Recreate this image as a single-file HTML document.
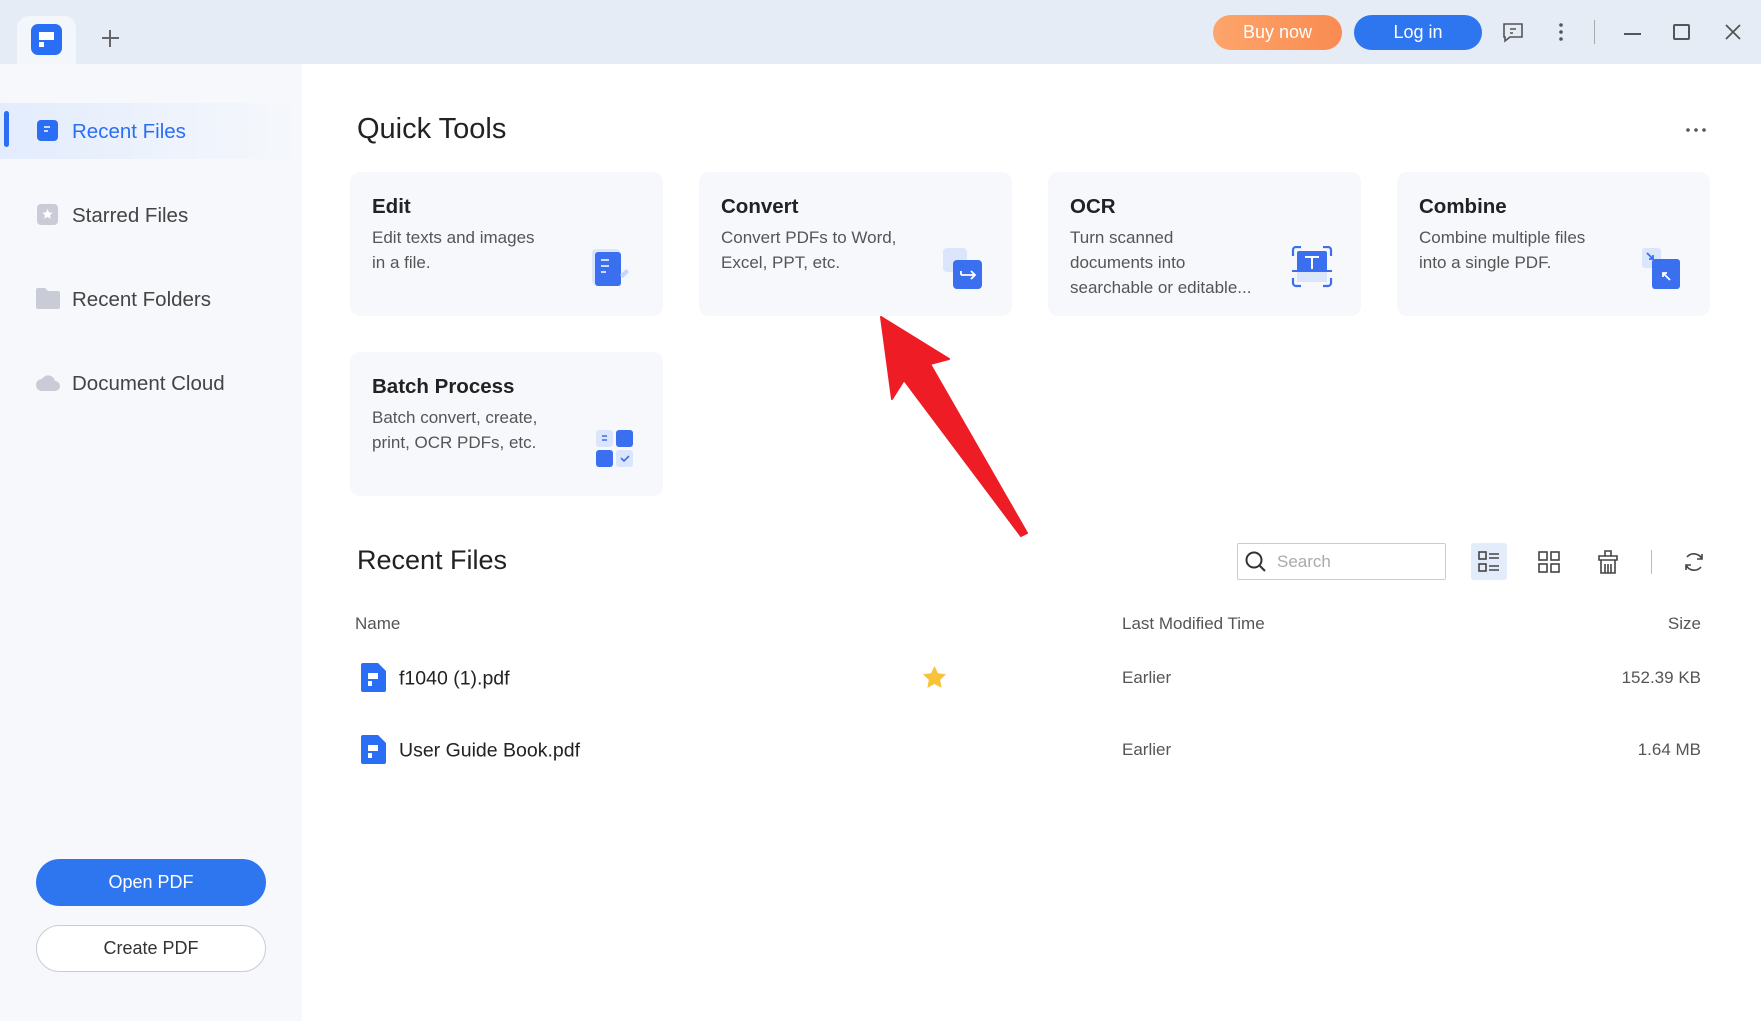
<!DOCTYPE html>
<html><head><meta charset="utf-8"><style>
*{margin:0;padding:0;box-sizing:border-box}
body{width:1761px;height:1021px;overflow:hidden;background:#fff;font-family:"Liberation Sans",sans-serif;position:relative;color:#222}
.abs{position:absolute}
.top{left:0;top:0;width:1761px;height:64px;background:#e5ecf6}
.side{left:0;top:64px;width:302px;height:957px;background:#f6f8fb}
.nav{left:72px;font-size:20.5px;color:#444;transform:translateY(-50%)}
.card{width:313px;height:144px;background:#f6f8fb;border-radius:10px}
.card h3{position:absolute;left:22px;top:23px;font-size:20.5px;font-weight:bold;color:#222}
.card p{position:absolute;left:22px;top:53px;font-size:17px;line-height:25px;color:#555}
.btn{border-radius:24px;text-align:center;font-size:18px}
.gray{color:#555;font-size:17px;transform:translateY(-50%)}
</style></head><body>
<div class="abs top"></div>
<div class="abs" style="left:17px;top:16px;width:59px;height:48px;background:#f3f6fb;border-radius:12px 12px 0 0"></div>
<svg class="abs" style="left:31px;top:24px" width="31" height="31" viewBox="0 0 31 31"><rect width="31" height="31" rx="7" fill="#2b6ef6"/><rect x="8" y="8" width="15" height="8" fill="#fff"/><rect x="8" y="18" width="5" height="5" fill="#fff"/></svg>
<div class="abs" style="left:102px;top:37px;width:17px;height:2px;background:#666"></div>
<div class="abs" style="left:109px;top:30px;width:2px;height:17px;background:#666"></div>
<div class="abs btn" style="left:1213px;top:15px;width:129px;height:35px;line-height:35px;background:linear-gradient(90deg,#fda56b,#f98b52);color:#fff">Buy now</div>
<div class="abs btn" style="left:1354px;top:15px;width:128px;height:35px;line-height:35px;background:#2e76f0;color:#fff">Log in</div>
<svg class="abs" style="left:1501px;top:20px" width="24" height="24" viewBox="0 0 24 24" fill="none" stroke="#555" stroke-width="1.6"><path d="M3 4h18v13H9l-5 4v-4H3z"/><path d="M9 9h6M9 13h3"/></svg>
<svg class="abs" style="left:1555px;top:20px" width="12" height="24"><circle cx="6" cy="5" r="1.8" fill="#555"/><circle cx="6" cy="12" r="1.8" fill="#555"/><circle cx="6" cy="19" r="1.8" fill="#555"/></svg>
<div class="abs" style="left:1594px;top:20px;width:1px;height:24px;background:#aaa"></div>
<div class="abs" style="left:1624px;top:33px;width:17px;height:2px;background:#555"></div>
<div class="abs" style="left:1673px;top:24px;width:17px;height:16px;border:2px solid #555;border-radius:2px"></div>
<svg class="abs" style="left:1724px;top:23px" width="18" height="18"><path d="M2 2L16 16M16 2L2 16" stroke="#555" stroke-width="1.8"/></svg>

<div class="abs side"></div>
<div class="abs" style="left:0;top:103px;width:302px;height:56px;background:linear-gradient(90deg,#e3ecfd,#f6f8fb)"></div>
<div class="abs" style="left:4px;top:111px;width:5px;height:36px;background:#2b6ef6;border-radius:3px"></div>
<svg class="abs" style="left:37px;top:120px" width="21" height="21"><rect width="21" height="21" rx="4" fill="#2b6ef6"/><path d="M7 7h6M7 11h4" stroke="#fff" stroke-width="1.6"/></svg>
<div class="abs nav" style="top:132px;color:#2b6ef6">Recent Files</div>
<svg class="abs" style="left:37px;top:204px" width="21" height="21"><rect width="21" height="21" rx="4" fill="#c9ccd6"/><path d="M10.5 5l1.6 3.4 3.6.4-2.7 2.4.8 3.6-3.3-1.9-3.3 1.9.8-3.6-2.7-2.4 3.6-.4z" fill="#fff"/></svg>
<div class="abs nav" style="top:216px">Starred Files</div>
<svg class="abs" style="left:36px;top:288px" width="24" height="21"><path d="M0 2a2 2 0 012-2h7l3 3h10a2 2 0 012 2v14a2 2 0 01-2 2H2a2 2 0 01-2-2z" fill="#c9ccd6"/></svg>
<div class="abs nav" style="top:300px">Recent Folders</div>
<svg class="abs" style="left:36px;top:373px" width="24" height="18"><path d="M6 18a6 6 0 010-12 7 7 0 0113 2 5 5 0 010 10z" fill="#c9ccd6"/></svg>
<div class="abs nav" style="top:384px">Document Cloud</div>
<div class="abs btn" style="left:36px;top:859px;width:230px;height:47px;line-height:47px;background:#2e76f0;color:#fff">Open PDF</div>
<div class="abs btn" style="left:36px;top:925px;width:230px;height:47px;line-height:45px;border:1.5px solid #c8ccd4;color:#333;background:#fff">Create PDF</div>

<div class="abs" style="left:357px;top:113px;font-size:29px;color:#222">Quick Tools</div>
<svg class="abs" style="left:1685px;top:127px" width="22" height="6"><circle cx="3" cy="3" r="1.8" fill="#555"/><circle cx="11" cy="3" r="1.8" fill="#555"/><circle cx="19" cy="3" r="1.8" fill="#555"/></svg>

<div class="abs card" style="left:350px;top:172px"><h3>Edit</h3><p>Edit texts and images<br>in a file.</p>
<svg class="abs" style="left:242px;top:75px" width="40" height="42"><rect x="0" y="2" width="28" height="36" rx="4" fill="#dbe6fc"/><rect x="3" y="5" width="26" height="34" rx="3" fill="#3a6ff0"/><path d="M9 13h8M9 19h8M9 25h5" stroke="#fff" stroke-width="1.6"/><path d="M28 28l6-6 3 3-6 6z" fill="#c6d6fb"/></svg></div>
<div class="abs card" style="left:699px;top:172px"><h3>Convert</h3><p>Convert PDFs to Word,<br>Excel, PPT, etc.</p>
<svg class="abs" style="left:244px;top:76px" width="42" height="42"><rect x="0" y="0" width="24" height="24" rx="4" fill="#dbe6fc"/><rect x="10" y="12" width="29" height="29" rx="4" fill="#3a6ff0"/><path d="M18 27h14M28 23l4 4-4 4M18 23v4" stroke="#fff" stroke-width="1.8" fill="none"/></svg></div>
<div class="abs card" style="left:1048px;top:172px"><h3>OCR</h3><p>Turn scanned<br>documents into<br>searchable or editable...</p>
<svg class="abs" style="left:243px;top:74px" width="42" height="42" fill="none"><path d="M2 10V4a3 3 0 013-3h5M32 1h5a3 3 0 013 3v6M2 32v5a3 3 0 003 3h5M32 40h5a3 3 0 003-3v-5" stroke="#3a6ff0" stroke-width="2.2"/><rect x="6" y="5" width="30" height="20" rx="2" fill="#3a6ff0"/><rect x="6" y="25" width="30" height="11" fill="#dbe6fc"/><path d="M1 25h40" stroke="#3a6ff0" stroke-width="2"/><path d="M14 11h14M21 11v12" stroke="#fff" stroke-width="2"/></svg></div>
<div class="abs card" style="left:1397px;top:172px"><h3>Combine</h3><p>Combine multiple files<br>into a single PDF.</p>
<svg class="abs" style="left:245px;top:76px" width="42" height="44"><rect x="0" y="0" width="19" height="20" rx="3" fill="#dbe6fc"/><rect x="10" y="11" width="28" height="30" rx="3" fill="#3a6ff0"/><path d="M5 5l6 6M11 7v4H7" stroke="#3a6ff0" stroke-width="1.8" fill="none"/><path d="M28 32l-7-7M21 29v-4h4" stroke="#fff" stroke-width="1.8" fill="none"/></svg></div>
<div class="abs card" style="left:350px;top:352px"><h3>Batch Process</h3><p>Batch convert, create,<br>print, OCR PDFs, etc.</p>
<svg class="abs" style="left:246px;top:78px" width="38" height="38"><rect x="0" y="0" width="17" height="17" rx="3" fill="#dbe6fc"/><rect x="20" y="0" width="17" height="17" rx="3" fill="#3a6ff0"/><rect x="0" y="20" width="17" height="17" rx="3" fill="#3a6ff0"/><rect x="20" y="20" width="17" height="17" rx="3" fill="#dbe6fc"/><path d="M6 6h5M6 10h5" stroke="#3a6ff0" stroke-width="1.4"/><path d="M25 28l3 3 5-5" stroke="#3a6ff0" stroke-width="1.6" fill="none"/></svg></div>

<div class="abs" style="left:357px;top:545px;font-size:27px;color:#222">Recent Files</div>
<div class="abs" style="left:1237px;top:543px;width:209px;height:37px;border:1.5px solid #c8ccd4;border-radius:2px"></div>
<svg class="abs" style="left:1244px;top:550px" width="24" height="24" fill="none" stroke="#333" stroke-width="2"><circle cx="10" cy="10" r="7.5"/><path d="M15.5 15.5L21 21"/></svg>
<div class="abs" style="left:1277px;top:552px;font-size:17px;color:#aaa">Search</div>
<div class="abs" style="left:1471px;top:543px;width:36px;height:37px;background:#e3ecfb;border-radius:3px"></div>
<svg class="abs" style="left:1478px;top:551px" width="22" height="22" fill="none" stroke="#444" stroke-width="1.6"><rect x="1" y="1" width="7" height="7"/><rect x="1" y="13" width="7" height="7"/><path d="M11 3h10M11 7h10M11 15h10M11 19h10"/></svg>
<svg class="abs" style="left:1538px;top:551px" width="22" height="22" fill="none" stroke="#444" stroke-width="1.6"><rect x="1" y="1" width="8" height="8"/><rect x="13" y="1" width="8" height="8"/><rect x="1" y="13" width="8" height="8"/><rect x="13" y="13" width="8" height="8"/></svg>
<svg class="abs" style="left:1597px;top:550px" width="22" height="24" fill="none" stroke="#444" stroke-width="1.6"><path d="M8 1h6v5H8zM2 6h18v4H2zM4 10v13h14V10M8 14v9M11 14v9M14 14v9"/></svg>
<div class="abs" style="left:1651px;top:550px;width:1px;height:24px;background:#bbb"></div>
<svg class="abs" style="left:1683px;top:551px" width="22" height="22" fill="none" stroke="#444" stroke-width="1.6"><path d="M4 6a9 9 0 0115 2M18 16a9 9 0 01-15-2M19 3v5h-5M3 19v-5h5"/></svg>

<div class="abs gray" style="left:355px;top:624px">Name</div>
<div class="abs gray" style="left:1122px;top:624px">Last Modified Time</div>
<div class="abs gray" style="right:60px;top:624px">Size</div>

<svg class="abs" style="left:361px;top:663px" width="25" height="29"><path d="M0 2a2 2 0 012-2h15l8 8v19a2 2 0 01-2 2H2a2 2 0 01-2-2z" fill="#2b6ef6"/><rect x="7" y="10" width="10" height="6" fill="#fff"/><rect x="7" y="18" width="4" height="5" fill="#fff"/></svg>
<div class="abs" style="left:399px;top:679px;font-size:19.5px;color:#222;transform:translateY(-50%)">f1040 (1).pdf</div>
<svg class="abs" style="left:922px;top:665px" width="25" height="24"><path d="M12.5 1l3.5 7.3 8 1-5.8 5.6 1.4 8-7.1-3.9-7.1 3.9 1.4-8L1 9.3l8-1z" fill="#f8c33a"/></svg>
<div class="abs gray" style="left:1122px;top:678px">Earlier</div>
<div class="abs gray" style="right:60px;top:678px">152.39 KB</div>

<svg class="abs" style="left:361px;top:735px" width="25" height="29"><path d="M0 2a2 2 0 012-2h15l8 8v19a2 2 0 01-2 2H2a2 2 0 01-2-2z" fill="#2b6ef6"/><rect x="7" y="10" width="10" height="6" fill="#fff"/><rect x="7" y="18" width="4" height="5" fill="#fff"/></svg>
<div class="abs" style="left:399px;top:751px;font-size:19.5px;color:#222;transform:translateY(-50%)">User Guide Book.pdf</div>
<div class="abs gray" style="left:1122px;top:750px">Earlier</div>
<div class="abs gray" style="right:60px;top:750px">1.64 MB</div>

<svg class="abs" style="left:0;top:0" width="1761" height="1021"><path d="M881 317L949 359L930 364L1027 533L1021 536L904 380L892 399Z" fill="#ee1c25" stroke="#ee1c25" stroke-width="2" stroke-linejoin="round"/></svg>
</body></html>
